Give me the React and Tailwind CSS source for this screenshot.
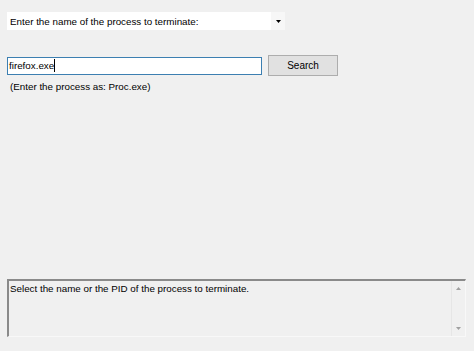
import React from 'react';

export default function App() {
  return (
    <div className="w-[474px] h-[351px] bg-[#f0f0f0] text-black text-[9.8px] leading-[13px] flex flex-col" style={{ fontFamily: '"Liberation Sans", Arial, sans-serif' }}>
      <div className="pt-[12px] pl-[7px]">
        <div className="w-[278px] h-[18px] bg-white flex items-center">
          <span className="pl-[3px] flex-1">Enter the name of the process to terminate:</span>
          <div className="w-[14px] h-full bg-[#f7f7f7] flex items-center justify-center">
            <svg width="5" height="3" viewBox="0 0 5 3"><path d="M0 0h5L2.5 3z" fill="#000" /></svg>
          </div>
        </div>
      </div>

      <div className="pt-[25px] pl-[7px] flex items-center gap-[6px]">
        <div className="w-[255px] h-[18px] bg-white border border-[#3c7fb1] flex items-center pl-[1px]">
          <span>firefox.exe</span>
          <span className="w-px h-[13px] bg-black" />
        </div>
        <button className="w-[70px] h-[21px] bg-[#e1e1e1] border border-[#adadad] text-[10px]">Search</button>
      </div>
      <div className="pl-[10px] pt-[4px]">(Enter the process as: Proc.exe)</div>

      <div className="flex-1" />

      <div className="pl-[7px] pb-[14px]">
        <div className="w-[459px] h-[58px] flex border-t-2 border-l-2 border-t-[#8a8a8a] border-l-[#8a8a8a] border-b border-r border-b-[#f8f8f8] border-r-[#f8f8f8] bg-[#f0f0f0]">
          <div className="flex-1 pl-[1px] pt-[1px]">Select the name or the PID of the process to terminate.</div>
          <div className="w-[14px] flex flex-col justify-between items-center py-[6px] border-l border-[#e6e6e6]">
            <svg width="5" height="3" viewBox="0 0 5 3"><path d="M0 3h5L2.5 0z" fill="#a0a0a0" /></svg>
            <svg width="5" height="3" viewBox="0 0 5 3"><path d="M0 0h5L2.5 3z" fill="#a0a0a0" /></svg>
          </div>
        </div>
      </div>
    </div>
  );
}
